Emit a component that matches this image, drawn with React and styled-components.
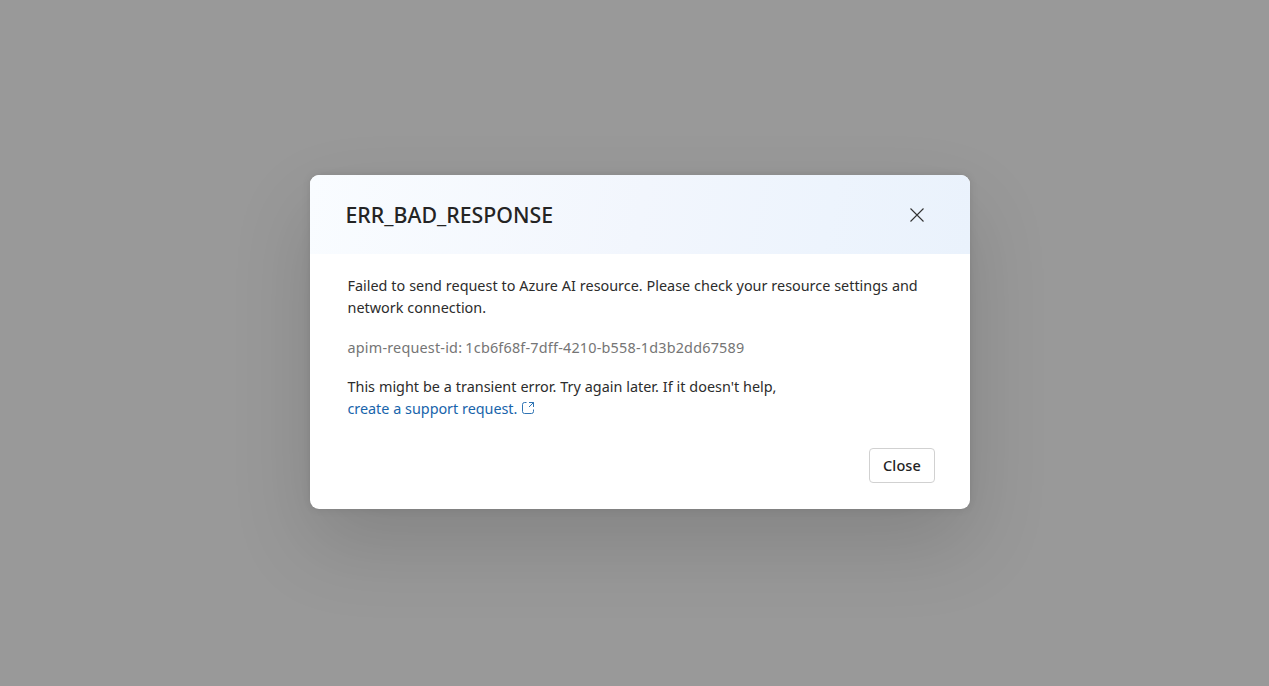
import React from "react";
import styled, { createGlobalStyle } from "styled-components";

const GlobalStyle = createGlobalStyle`
    body {
        margin: 0;
        background-color: #999999;
        font-family: "Noto Sans", "Open Sans", sans-serif;
        overflow: hidden;
    }
`;

const Overlay = styled.div`
    height: 100vh;
    box-sizing: border-box;
    padding: 0 0 2px 11px;
    display: flex;
    align-items: center;
    justify-content: center;
`;

const Dialog = styled.div`
    width: 660px;
    height: 334px;
    border-radius: 9px;
    background-color: #ffffff;
    overflow: hidden;
    box-shadow: 0 0 9px rgba(0, 0, 0, 0.1), 0 35px 82px rgba(0, 0, 0, 0.14);
`;

const Header = styled.div`
    height: 79px;
    box-sizing: border-box;
    padding: 0 44px 0 35.5px;
    display: flex;
    align-items: center;
    justify-content: space-between;
    background: linear-gradient(100deg, #f9fcff 0%, #f2f6fd 50%, #edf4fd 78%, #eaf2fc 100%);
`;

const Title = styled.h1`
    margin: 0;
    font-size: 21.3px;
    font-weight: 500;
    line-height: 30px;
    color: #242424;
    white-space: nowrap;
`;

const IconButton = styled.button`
    padding: 0;
    border: none;
    background: none;
    display: flex;
    color: #333333;
`;

const Content = styled.div`
    padding: 21px 37px 0 37.5px;
`;

const Message = styled.p`
    margin: 0 0 17px;
    font-size: 14.4px;
    line-height: 22px;
    word-spacing: 0.18px;
    color: #2c2c2c;
    white-space: nowrap;
`;

const RequestId = styled(Message)`
    margin-top: 18px;
    letter-spacing: 0.2px;
    word-spacing: -0.8px;
    color: #757575;
`;

const SupportLink = styled.a`
    letter-spacing: -0.04px;
    color: #1864ab;

    svg {
        margin-left: 5px;
        vertical-align: 0.5px;
    }
`;

const Footer = styled.div`
    padding: 11px 35px 0;
    display: flex;
    justify-content: flex-end;
`;

const CloseButton = styled.button`
    width: 66px;
    height: 35px;
    padding: 0 0 2px;
    border: 1px solid #d1d1d1;
    border-radius: 4px;
    background-color: #ffffff;
    font-family: inherit;
    font-size: 14.5px;
    font-weight: 550;
    letter-spacing: 0.1px;
    color: #242424;
`;

const App = () => {
    return (
        <>
            <GlobalStyle />
            <Overlay>
                <Dialog role="dialog">
                    <Header>
                        <Title>ERR_BAD_RESPONSE</Title>
                        <IconButton aria-label="Dismiss">
                            <svg width="18" height="18" viewBox="0 0 18 18" fill="none" stroke="currentColor" strokeWidth="1.1">
                                <path d="M2.5 2.5l13 13M15.5 2.5l-13 13" />
                            </svg>
                        </IconButton>
                    </Header>
                    <Content>
                        <Message>
                            Failed to send request to Azure AI resource. Please check your resource settings and
                            <br />
                            network connection.
                        </Message>
                        <RequestId>apim-request-id: 1cb6f68f-7dff-4210-b558-1d3b2dd67589</RequestId>
                        <Message>
                            This might be a transient error. Try again later. If it doesn't help,
                            <br />
                            <SupportLink>
                                create a support request.
                                <svg width="12" height="12" viewBox="0 0 12 12" fill="none" stroke="currentColor" strokeWidth="0.9">
                                    <path d="M4.500.5H2.500a2 2 0 0 0-2 2v7a2 2 0 0 0 2 2h7a2 2 0 0 0 2-2V7.500M7 .5h4.500v4.500M11.500.5L7 5" />
                                </svg>
                            </SupportLink>
                        </Message>
                    </Content>
                    <Footer>
                        <CloseButton>Close</CloseButton>
                    </Footer>
                </Dialog>
            </Overlay>
        </>
    );
};

export default App;
